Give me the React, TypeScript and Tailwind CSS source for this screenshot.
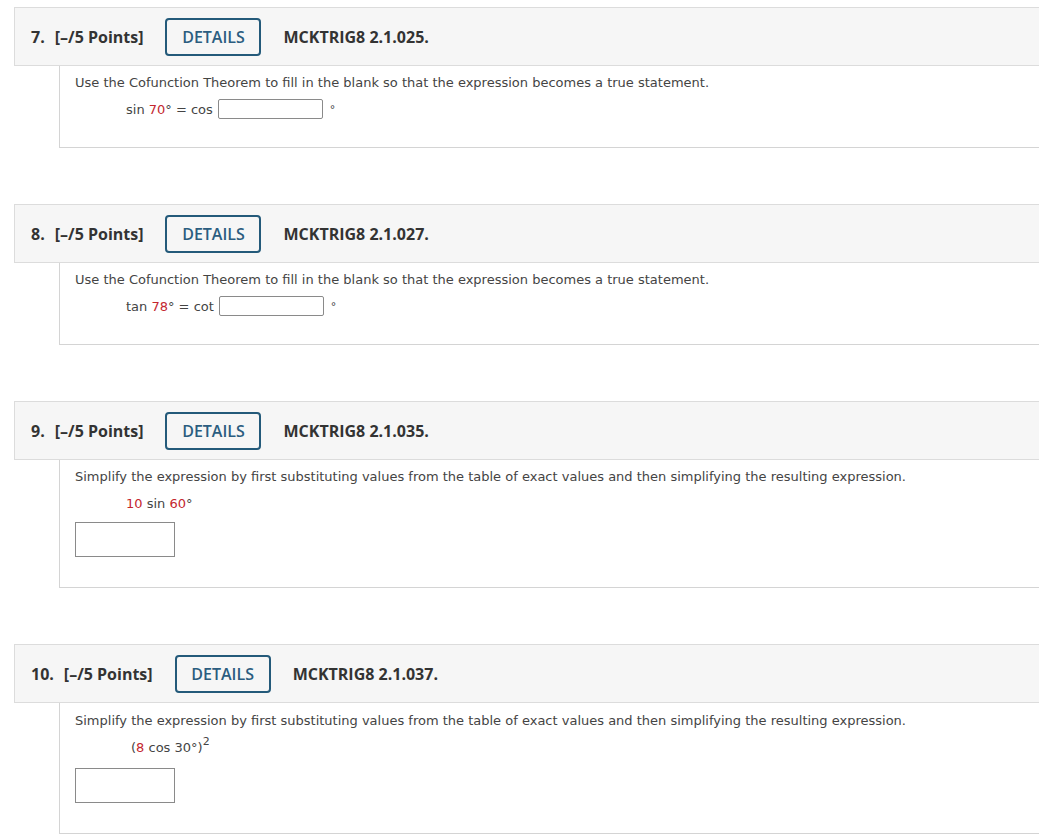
import React from "react";

type Question = {
  num: string;
  code: string;
  prompt: string;
  kind: "inline" | "block";
  tallExpr?: boolean;
  expr: React.ReactNode;
};

const red = "text-[#c4262e]";

const questions: Question[] = [
  {
    num: "7.",
    code: "MCKTRIG8 2.1.025.",
    prompt:
      "Use the Cofunction Theorem to fill in the blank so that the expression becomes a true statement.",
    kind: "inline",
    expr: (
      <>
        sin <span className={red}>70</span>° = cos
      </>
    ),
  },
  {
    num: "8.",
    code: "MCKTRIG8 2.1.027.",
    prompt:
      "Use the Cofunction Theorem to fill in the blank so that the expression becomes a true statement.",
    kind: "inline",
    expr: (
      <>
        tan <span className={red}>78</span>° = cot
      </>
    ),
  },
  {
    num: "9.",
    code: "MCKTRIG8 2.1.035.",
    prompt:
      "Simplify the expression by first substituting values from the table of exact values and then simplifying the resulting expression.",
    kind: "block",
    expr: (
      <span>
        <span className={red}>10</span> sin <span className={red}>60</span>°
      </span>
    ),
  },
  {
    num: "10.",
    code: "MCKTRIG8 2.1.037.",
    prompt:
      "Simplify the expression by first substituting values from the table of exact values and then simplifying the resulting expression.",
    kind: "block",
    tallExpr: true,
    expr: (
      <span className="pl-[5px]">
        (<span className={red}>8</span> cos 30°)
        <sup className="relative top-[-7px] text-[11px]">2</sup>
      </span>
    ),
  },
];

function Header({ num, code }: { num: string; code: string }) {
  return (
    <div className="ml-[14px] flex h-[59px] items-center border-y border-l border-[#dcdcdc] bg-[#f6f6f6] pl-[16px] font-['Open_Sans',sans-serif] text-[16px] font-bold text-[#333]">
      <span className="mr-[10px]">{num}</span>
      <span>[–/5 Points]</span>
      <button className="mx-[22px] flex h-[38px] w-[96px] items-center justify-center rounded-[4px] border-2 border-[#245a7a] font-semibold text-[#2b5d80]">
        DETAILS
      </button>
      <span>{code}</span>
    </div>
  );
}

function QuestionCard({ q }: { q: Question }) {
  return (
    <div className="mb-[56px]">
      <Header num={q.num} code={q.code} />
      <div className="ml-[59px] border-b border-l border-[#d4d4d4] pl-[15px] pt-[8px] font-['DejaVu_Sans',sans-serif] text-[13px] leading-[17px] text-[#444]">
        <p className={q.tallExpr ? "mt-[1px]" : ""}>{q.prompt}</p>
        {q.kind === "inline" ? (
          <>
            <div className="mt-[8px] flex h-[20px] items-center pl-[51px]">
              <span>{q.expr}</span>
              <input className="ml-[5px] h-[20px] w-[105px] rounded-[2px] border border-[#8a8a8a] bg-white" />
              <span className="ml-[7px] text-[11px]">°</span>
            </div>
            <div className="h-[28px]" />
          </>
        ) : (
          <>
            <div className="mt-[8px] flex h-[20px] items-center pl-[51px]">{q.expr}</div>
            <input
              className={`${q.tallExpr ? "mt-[11px]" : "mt-[9px]"} block h-[35px] w-[100px] border border-[#8a8a8a] bg-white`}
            />
            <div className="h-[30px]" />
          </>
        )}
      </div>
    </div>
  );
}

export default function App() {
  return (
    <div className="min-h-screen bg-white pt-[7px]">
      {questions.map((q) => (
        <QuestionCard key={q.num} q={q} />
      ))}
    </div>
  );
}
